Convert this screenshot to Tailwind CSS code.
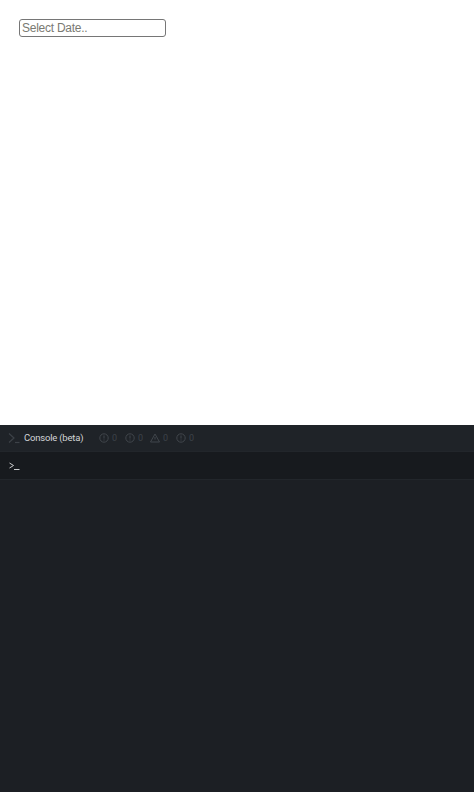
<!DOCTYPE html>
<html lang="en">
<head>
    <meta charset="UTF-8">
    <meta name="viewport" content="width=device-width, initial-scale=1.0">
    <title>Date picker with console</title>
    <script src="https://cdn.jsdelivr.net/npm/@tailwindcss/browser@4"></script>
</head>
<body class="bg-white h-[792px] overflow-hidden flex flex-col font-['Liberation_Sans',sans-serif]">
    <!-- Preview -->
    <div class="h-[425px] pt-[19px] pl-[19px]">
        <input type="text" placeholder="Select Date.." class="block w-[147px] h-[18px] px-[2px] bg-white border border-[#767676] rounded-[3px] text-[12px] tracking-[-0.25px] text-black placeholder:text-[#7a7a72] outline-none">
    </div>

    <!-- Console -->
    <div class="flex-1 flex flex-col bg-[#1c1f24]">
        <div class="h-[26px] flex items-center bg-[#1f2328] pl-[8px] font-['Roboto',sans-serif]">
            <svg class="w-[12px] h-[12px] mr-[4px]" viewBox="0 0 12 12" fill="none" stroke="#3d4248" stroke-width="1.2">
                <path d="M1 1.5 6 6 1 10.5"/>
                <path d="M7 10.5h4.5"/>
            </svg>
            <span class="w-[58px] pt-px text-[9.5px] tracking-[-0.2px] text-[#d3d5d6] whitespace-nowrap">Console (beta)</span>
            <div class="flex items-center ml-[17px] text-[9px] text-[#3d4248]">
                <svg class="w-[10px] h-[10px] mr-[3px]" viewBox="0 0 10 10" fill="none" stroke="#41464c">
                    <circle cx="5" cy="5" r="4.2"/>
                    <path d="M5 2.5v3M5 6.5v1"/>
                </svg>
                <span class="w-[13px] pt-[2px]">0</span>
                <svg class="w-[10px] h-[10px] mr-[3px]" viewBox="0 0 10 10" fill="none" stroke="#41464c">
                    <circle cx="5" cy="5" r="4.2"/>
                    <path d="M5 2.5v3M5 6.5v1"/>
                </svg>
                <span class="w-[12px] pt-[2px]">0</span>
                <svg class="w-[10px] h-[10px] mr-[3px]" viewBox="0 0 10 10" fill="none" stroke="#41464c">
                    <path d="M5 1 9.5 9h-9z"/>
                    <path d="M5 4v2.5"/>
                </svg>
                <span class="w-[13px] pt-[2px]">0</span>
                <svg class="w-[10px] h-[10px] mr-[3px]" viewBox="0 0 10 10" fill="none" stroke="#41464c">
                    <circle cx="5" cy="5" r="4.2"/>
                    <path d="M5 2.5v3M5 6.5v1"/>
                </svg>
                <span class="pt-[2px]">0</span>
            </div>
        </div>
        <div class="h-[29px] flex items-center bg-[#171a1e] border-t border-b border-[#22262b] pl-[9px]">
            <svg class="w-[11px] h-[8px]" viewBox="0 0 11 8" fill="none" stroke="#c9cbcd" stroke-width="1">
                <path d="M0.5 1 4.5 3.5 0.5 6"/>
                <path d="M5 7.5h5.5"/>
            </svg>
        </div>
    </div>
</body>
</html>
